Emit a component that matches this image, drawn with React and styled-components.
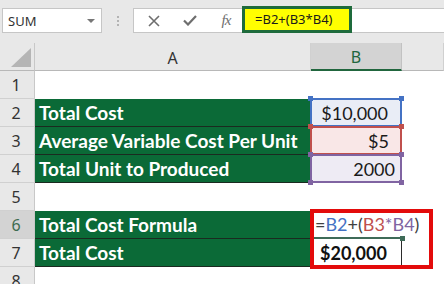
import React from 'react';
import styled, { createGlobalStyle } from 'styled-components';

const GlobalStyle = createGlobalStyle`
  html, body {
    margin: 0;
    padding: 0;
    background: #ffffff;
  }
  body {
    width: 444px;
    height: 284px;
    overflow: hidden;
    font-family: "Noto Sans", "Liberation Sans", sans-serif;
  }
`;

const Frame = styled.div`
  width: 444px;
  height: 284px;
  overflow: hidden;
  background: #e8e8e8;
`;

const Toolbar = styled.div`
  height: 43px;
  box-sizing: border-box;
  padding: 8px 0 0 2px;
  display: flex;
  align-items: flex-start;
`;

const NameBox = styled.div`
  width: 100px;
  height: 25px;
  box-sizing: border-box;
  background: #fff;
  border: 1px solid #c6c6c6;
  display: flex;
  align-items: center;
  justify-content: space-between;
  padding: 0 6px 0 5px;
  font-size: 13px;
  color: #333;
`;

const Caret = styled.span`
  width: 0;
  height: 0;
  border-left: 4px solid transparent;
  border-right: 4px solid transparent;
  border-top: 4px solid #777;
`;

const Grip = styled.div`
  width: 31px;
  height: 25px;
  display: flex;
  flex-direction: column;
  align-items: center;
  justify-content: center;
  gap: 2px;

  span {
    width: 2px;
    height: 2px;
    background: #b3b3b3;
  }
`;

const FormulaBox = styled.div`
  flex: 1;
  height: 25px;
  box-sizing: border-box;
  background: #fff;
  border: 1px solid #c6c6c6;
  border-right: none;
  display: flex;
  align-items: center;
`;

const IconSlot = styled.div`
  width: 36px;
  height: 23px;
  display: flex;
  align-items: center;
  justify-content: center;
  color: #6e6e6e;
`;

const Fx = styled.span`
  font-family: "Liberation Serif", serif;
  font-style: italic;
  font-size: 15px;
  color: #6e6e6e;
  letter-spacing: -1px;
`;

const Highlight = styled.div`
  margin-left: -2px;
  margin-top: -3px;
  width: 110px;
  height: 27px;
  box-sizing: border-box;
  background: #ffff00;
  border: 3px solid #1e6b3c;
  display: flex;
  align-items: center;
  padding-left: 10px;
  font-size: 13px;
  color: #1a1a1a;
`;

const Sheet = styled.div`
  display: grid;
  grid-template-columns: 35px 276px 91px 42px;
  grid-template-rows: repeat(9, 28px);
  background: #ffffff;
  font-family: "Lato", "Liberation Sans", sans-serif;
`;

const Corner = styled.div`
  background: #e8e8e8;
  border-right: 1px solid #c8c8c8;
  border-bottom: 1px solid #b8b8b8;
  box-sizing: border-box;
  display: flex;
  align-items: flex-end;
  justify-content: flex-end;
  padding: 0 3px 3px 0;

  &::after {
    content: '';
    width: 0;
    height: 0;
    border-left: 20px solid transparent;
    border-bottom: 19px solid #b5b5b5;
  }
`;

const ColHeader = styled.div`
  box-sizing: border-box;
  background: ${p => (p.$active ? '#d3d3d3' : '#e8e8e8')};
  color: ${p => (p.$active ? '#21663e' : '#333')};
  border-right: 1px solid ${p => (p.$active ? '#c2c2c2' : '#d0d0d0')};
  border-bottom: ${p => (p.$active ? '2px solid #21663e' : '1px solid #b8b8b8')};
  font-family: "Noto Sans", sans-serif;
  font-size: 16px;
  display: flex;
  align-items: center;
  justify-content: center;
  padding-top: 2px;
`;

const RowHeader = styled.div`
  box-sizing: border-box;
  background: ${p => (p.$active ? '#d3d3d3' : '#e8e8e8')};
  color: ${p => (p.$active ? '#3d6b50' : '#333')};
  border-right: 1px solid #c8c8c8;
  border-bottom: 1px solid #d0d0d0;
  font-family: "Noto Sans", sans-serif;
  font-size: 16px;
  display: flex;
  align-items: center;
  justify-content: center;
  padding-right: 2px;
`;

const LabelCell = styled.div`
  box-sizing: border-box;
  background: #0b6a37;
  border-bottom: 1px solid #1b2a20;
  border-right: 1px solid #1b2a20;
  color: #ffffff;
  font-weight: 700;
  font-size: 19px;
  display: flex;
  align-items: center;
  padding-left: 4px;
  white-space: nowrap;
`;

const Empty = styled.div``;

const tones = {
  blue: { line: '#4472c4', fill: '#e9edf6' },
  red: { line: '#c0504d', fill: '#f9e7e7' },
  purple: { line: '#8064a2', fill: '#eeebf4' },
};

const ValueCell = styled.div`
  position: relative;
  box-sizing: border-box;
  margin: -1px 0 0 -1px;
  background: ${p => tones[p.$tone].fill};
  border: 2px solid ${p => tones[p.$tone].line};
  color: #1a1a1a;
  font-size: 18px;
  display: flex;
  align-items: center;
  justify-content: flex-end;
  padding-right: ${p => p.$pad}px;
  z-index: ${p => p.$layer};
`;

const Handle = styled.span`
  position: absolute;
  width: 5px;
  height: 5px;
  background: ${p => tones[p.$tone].line};
  ${p => (p.$top ? 'top: -4px;' : 'bottom: -4px;')}
  ${p => (p.$left ? 'left: -4px;' : 'right: -4px;')}
`;

const FormulaCell = styled.div`
  grid-area: 7 / 3;
  position: relative;
  z-index: 3;
  box-sizing: border-box;
  border-bottom: 2px solid #3e6b58;
  margin-left: 3px;
  font-size: 18px;
  display: flex;
  align-items: center;
  padding-left: 1px;
  white-space: nowrap;
  overflow: visible;
  color: #404040;
`;

const Ref = styled.span`
  color: ${p => tones[p.$tone].line};
`;

const FillHandle = styled.span`
  position: absolute;
  right: -3px;
  bottom: -4px;
  width: 5px;
  height: 5px;
  background: #3e6b58;
`;

const ResultCell = styled.div`
  grid-area: 8 / 3;
  box-sizing: border-box;
  border-right: 1px solid #2b2b2b;
  margin: 1px 0 2px;
  font-size: 18px;
  font-weight: 700;
  color: #111;
  display: flex;
  align-items: center;
  padding-left: 9px;
`;

const Callout = styled.div`
  grid-column: 3 / 5;
  grid-row: 7 / 9;
  margin: -2px 11px -2px -1px;
  border: 4px solid #e30b0b;
  z-index: 5;
  pointer-events: none;
`;

const ranges = [
  { row: 2, label: 'Total Cost', value: '$10,000', tone: 'blue', pad: 12 },
  { row: 3, label: 'Average Variable Cost Per Unit', value: '$5', tone: 'red', pad: 11 },
  { row: 4, label: 'Total Unit to Produced', value: '2000', tone: 'purple', pad: 5 },
];

function XIcon() {
  return (
    <svg width="12" height="12" viewBox="0 0 12 12">
      <path d="M1 1 L11 11 M11 1 L1 11" stroke="#6e6e6e" strokeWidth="1.6" fill="none" />
    </svg>
  );
}

function CheckIcon() {
  return (
    <svg width="14" height="11" viewBox="0 0 14 11">
      <path d="M1 5.5 L5 9.5 L13 1" stroke="#6e6e6e" strokeWidth="2.2" fill="none" />
    </svg>
  );
}

function RangeCorners({ tone }) {
  return (
    <>
      <Handle $tone={tone} $top $left />
      <Handle $tone={tone} $top />
      <Handle $tone={tone} $left />
      <Handle $tone={tone} />
    </>
  );
}

export default function App() {
  return (
    <Frame>
      <GlobalStyle />
      <Toolbar>
        <NameBox>
          SUM
          <Caret />
        </NameBox>
        <Grip>
          <span />
          <span />
          <span />
        </Grip>
        <FormulaBox>
          <IconSlot style={{ marginLeft: 2 }}>
            <XIcon />
          </IconSlot>
          <IconSlot>
            <CheckIcon />
          </IconSlot>
          <IconSlot>
            <Fx>fx</Fx>
          </IconSlot>
          <Highlight>=B2+(B3*B4)</Highlight>
        </FormulaBox>
      </Toolbar>

      <Sheet>
        <Corner />
        <ColHeader>A</ColHeader>
        <ColHeader $active>B</ColHeader>
        <ColHeader />

        <RowHeader>1</RowHeader>
        <Empty />
        <Empty />
        <Empty />

        {ranges.map((r, i) => (
          <React.Fragment key={r.row}>
            <RowHeader>{r.row}</RowHeader>
            <LabelCell>{r.label}</LabelCell>
            <ValueCell $tone={r.tone} $pad={r.pad} $layer={i + 1}>
              {r.value}
              <RangeCorners tone={r.tone} />
            </ValueCell>
            <Empty />
          </React.Fragment>
        ))}

        <RowHeader>5</RowHeader>
        <Empty />
        <Empty />
        <Empty />

        <RowHeader $active>6</RowHeader>
        <LabelCell>Total Cost Formula</LabelCell>
        <FormulaCell>
          =<Ref $tone="blue">B2</Ref>+(<Ref $tone="red">B3</Ref>
          <Ref $tone="purple">*</Ref>
          <Ref $tone="purple">B4</Ref>)
          <FillHandle />
        </FormulaCell>

        <RowHeader>7</RowHeader>
        <LabelCell>Total Cost</LabelCell>
        <ResultCell>$20,000</ResultCell>

        <RowHeader>8</RowHeader>
        <Empty />
        <Empty />
        <Empty />

        <Callout />
      </Sheet>
    </Frame>
  );
}
